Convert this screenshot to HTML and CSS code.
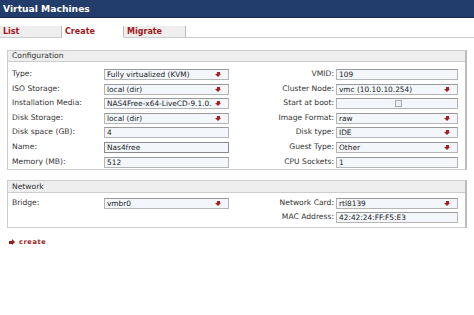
FILE: index.html
```html
<!DOCTYPE html>
<html lang="en">
<head>
  <meta charset="UTF-8">
  <title>Virtual Machines</title>
  <link rel="stylesheet" href="styles.css">
</head>
<body>
  <div class="titulo">Virtual Machines</div>

  <div class="abas">
    <div class="aba">List</div>
    <div class="aba ativa">Create</div>
    <div class="aba">Migrate</div>
    <div class="resto"></div>
  </div>

  <div class="caixa">
    <div class="legenda">Configuration</div>
    <div class="grade">
      <div class="rotulo">Type:</div>
      <div class="campo select">Fully virtualized (KVM)<span class="seta"></span></div>
      <div class="rotulo dir">VMID:</div>
      <div class="campo">109</div>

      <div class="rotulo">ISO Storage:</div>
      <div class="campo select">local (dir)<span class="seta"></span></div>
      <div class="rotulo dir">Cluster Node:</div>
      <div class="campo select">vmc (10.10.10.254)<span class="seta"></span></div>

      <div class="rotulo">Installation Media:</div>
      <div class="campo select">NAS4Free-x64-LiveCD-9.1.0.<span class="seta"></span></div>
      <div class="rotulo dir">Start at boot:</div>
      <div class="campo centro"><span class="check"></span></div>

      <div class="rotulo">Disk Storage:</div>
      <div class="campo select">local (dir)<span class="seta"></span></div>
      <div class="rotulo dir">Image Format:</div>
      <div class="campo select">raw<span class="seta"></span></div>

      <div class="rotulo">Disk space (GB):</div>
      <div class="campo">4</div>
      <div class="rotulo dir">Disk type:</div>
      <div class="campo select">IDE<span class="seta"></span></div>

      <div class="rotulo">Name:</div>
      <div class="campo foco">Nas4free</div>
      <div class="rotulo dir">Guest Type:</div>
      <div class="campo select">Other<span class="seta"></span></div>

      <div class="rotulo">Memory (MB):</div>
      <div class="campo">512</div>
      <div class="rotulo dir">CPU Sockets:</div>
      <div class="campo">1</div>
    </div>
  </div>

  <div class="caixa rede">
    <div class="legenda">Network</div>
    <div class="grade">
      <div class="rotulo">Bridge:</div>
      <div class="campo select">vmbr0<span class="seta"></span></div>
      <div class="rotulo dir">Network Card:</div>
      <div class="campo select">rtl8139<span class="seta"></span></div>

      <div class="rotulo"></div>
      <div></div>
      <div class="rotulo dir">MAC Address:</div>
      <div class="campo">42:42:24:FF:F5:E3</div>
    </div>
  </div>

  <div class="acao"><span class="seta-dir"></span>create</div>
</body>
</html>
```

FILE: styles.css
```css
body {
  margin: 0;
  background: #fff;
  font-family: 'DejaVu Sans', Verdana, sans-serif;
  font-size: 7.6px;
  color: #222;
}

.titulo {
  height: 17px;
  line-height: 17px;
  background: #223c6c;
  border-bottom: 1px solid #16294d;
  color: #fff;
  font-weight: bold;
  font-size: 9.2px;
  padding-left: 3px;
}

.abas {
  display: flex;
  margin-top: 8px;
  height: 12px;
}

.aba {
  width: 62px;
  box-sizing: border-box;
  background: #eeeeee;
  border-right: 1px solid #bbb;
  border-bottom: 1px solid #ccc;
  color: #a01818;
  font-weight: bold;
  font-size: 8px;
  line-height: 12px;
  padding-left: 3px;
}

.aba.ativa {
  background: #fff;
  border-bottom-color: #fff;
}

.resto {
  flex: 1;
  border-bottom: 1px solid #ccc;
}

.caixa {
  margin: 12px 7px 0 7px;
  border: 1px solid #ccc;
  border-right: 2px solid #bbb;
  padding-bottom: 1px;
}

.legenda {
  height: 10px;
  line-height: 10px;
  background: #eeeeee;
  border-bottom: 1px solid #ccc;
  padding-left: 4px;
  color: #333;
}

.grade {
  display: grid;
  grid-template-columns: 92px 125px 107px 122px;
  grid-auto-rows: 11px;
  row-gap: 3.6px;
  padding: 7px 0 0 4px;
}

.rotulo {
  line-height: 9px;
  color: #333;
}

.rotulo.dir {
  text-align: right;
  padding-right: 2px;
}

.campo {
  position: relative;
  height: 11px;
  line-height: 10px;
  box-sizing: border-box;
  border: 1px solid #b5b5b5;
  border-top-color: #999;
  background: #f3f7fb;
  padding-left: 2px;
  color: #222;
  font-size: 7.4px;
  white-space: nowrap;
}

.campo.foco {
  border-color: #8a8a8a;
}

.campo.centro {
  display: flex;
  justify-content: center;
  align-items: center;
}

.check {
  width: 5px;
  height: 5px;
  border: 1px solid #aaa;
  background: #eee;
}

.seta {
  position: absolute;
  right: 7px;
  top: 2px;
  width: 5px;
  height: 5px;
  background:
    linear-gradient(#b01c1c, #b01c1c) center top / 3px 2px no-repeat;
}

.seta::after {
  content: '';
  position: absolute;
  left: -1px;
  top: 2px;
  border-left: 3.5px solid transparent;
  border-right: 3.5px solid transparent;
  border-top: 3.5px solid #b01c1c;
}

.rede {
  margin-top: 10px;
  padding-bottom: 4px;
}

.rede .legenda {
  height: 11px;
  line-height: 11px;
}

.rede .grade {
  padding-top: 5px;
}

.acao {
  display: flex;
  align-items: center;
  margin: 10px 0 0 9px;
  color: #a01818;
  font-weight: bold;
  font-size: 6.6px;
  letter-spacing: 0.6px;
}

.seta-dir {
  position: relative;
  width: 3px;
  height: 3px;
  background: #a01818;
  margin-right: 7px;
}

.seta-dir::after {
  content: '';
  position: absolute;
  left: 3px;
  top: -2px;
  border-top: 3.5px solid transparent;
  border-bottom: 3.5px solid transparent;
  border-left: 3.5px solid #a01818;
}
```
